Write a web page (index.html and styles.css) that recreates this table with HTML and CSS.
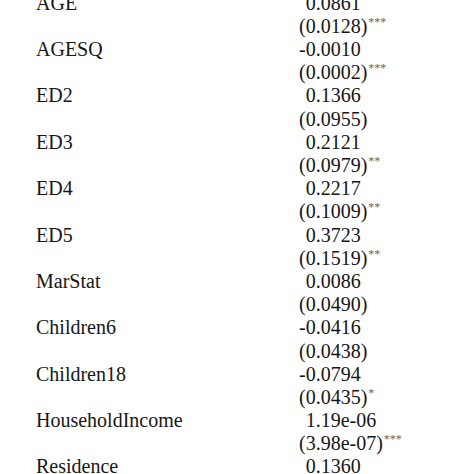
FILE: index.html
```html
<!DOCTYPE html>
<html>
<head>
<meta charset="utf-8">
<link rel="stylesheet" href="styles.css">
</head>
<body>
<div class="table">
  <div class="label">AGE</div><div class="val pos">0.0861</div>
  <div class="label"></div><div class="val">(0.0128)<sup class="stars">***</sup></div>
  <div class="label">AGESQ</div><div class="val">-0.0010</div>
  <div class="label"></div><div class="val">(0.0002)<sup class="stars">***</sup></div>
  <div class="label">ED2</div><div class="val pos">0.1366</div>
  <div class="label"></div><div class="val">(0.0955)</div>
  <div class="label">ED3</div><div class="val pos">0.2121</div>
  <div class="label"></div><div class="val">(0.0979)<sup class="stars">**</sup></div>
  <div class="label">ED4</div><div class="val pos">0.2217</div>
  <div class="label"></div><div class="val">(0.1009)<sup class="stars">**</sup></div>
  <div class="label">ED5</div><div class="val pos">0.3723</div>
  <div class="label"></div><div class="val">(0.1519)<sup class="stars">**</sup></div>
  <div class="label">MarStat</div><div class="val pos">0.0086</div>
  <div class="label"></div><div class="val">(0.0490)</div>
  <div class="label">Children6</div><div class="val">-0.0416</div>
  <div class="label"></div><div class="val">(0.0438)</div>
  <div class="label">Children18</div><div class="val">-0.0794</div>
  <div class="label"></div><div class="val">(0.0435)<sup class="stars">*</sup></div>
  <div class="label">HouseholdIncome</div><div class="val pos">1.19e-06</div>
  <div class="label"></div><div class="val">(3.98e-07)<sup class="stars">***</sup></div>
  <div class="label">Residence</div><div class="val pos">0.1360</div>
</div>
</body>
</html>
```
FILE: styles.css
```css
html, body {
  margin: 0;
  padding: 0;
  background: #ffffff;
  overflow: hidden;
}
body {
  font-family: "Liberation Serif", "Times New Roman", serif;
  font-size: 20px;
  color: #161616;
}
.table {
  display: grid;
  grid-template-columns: 263px auto;
  padding-left: 36px;
  margin-top: -8.3px;
  line-height: 23.2px;
}
.label, .val {
  height: 23.2px;
  white-space: nowrap;
}
.val.pos {
  padding-left: 6.7px;
}
.stars {
  font-size: 12px;
  line-height: 0;
  vertical-align: 7px;
  color: #666666;
  margin-left: 1px;
}
```
